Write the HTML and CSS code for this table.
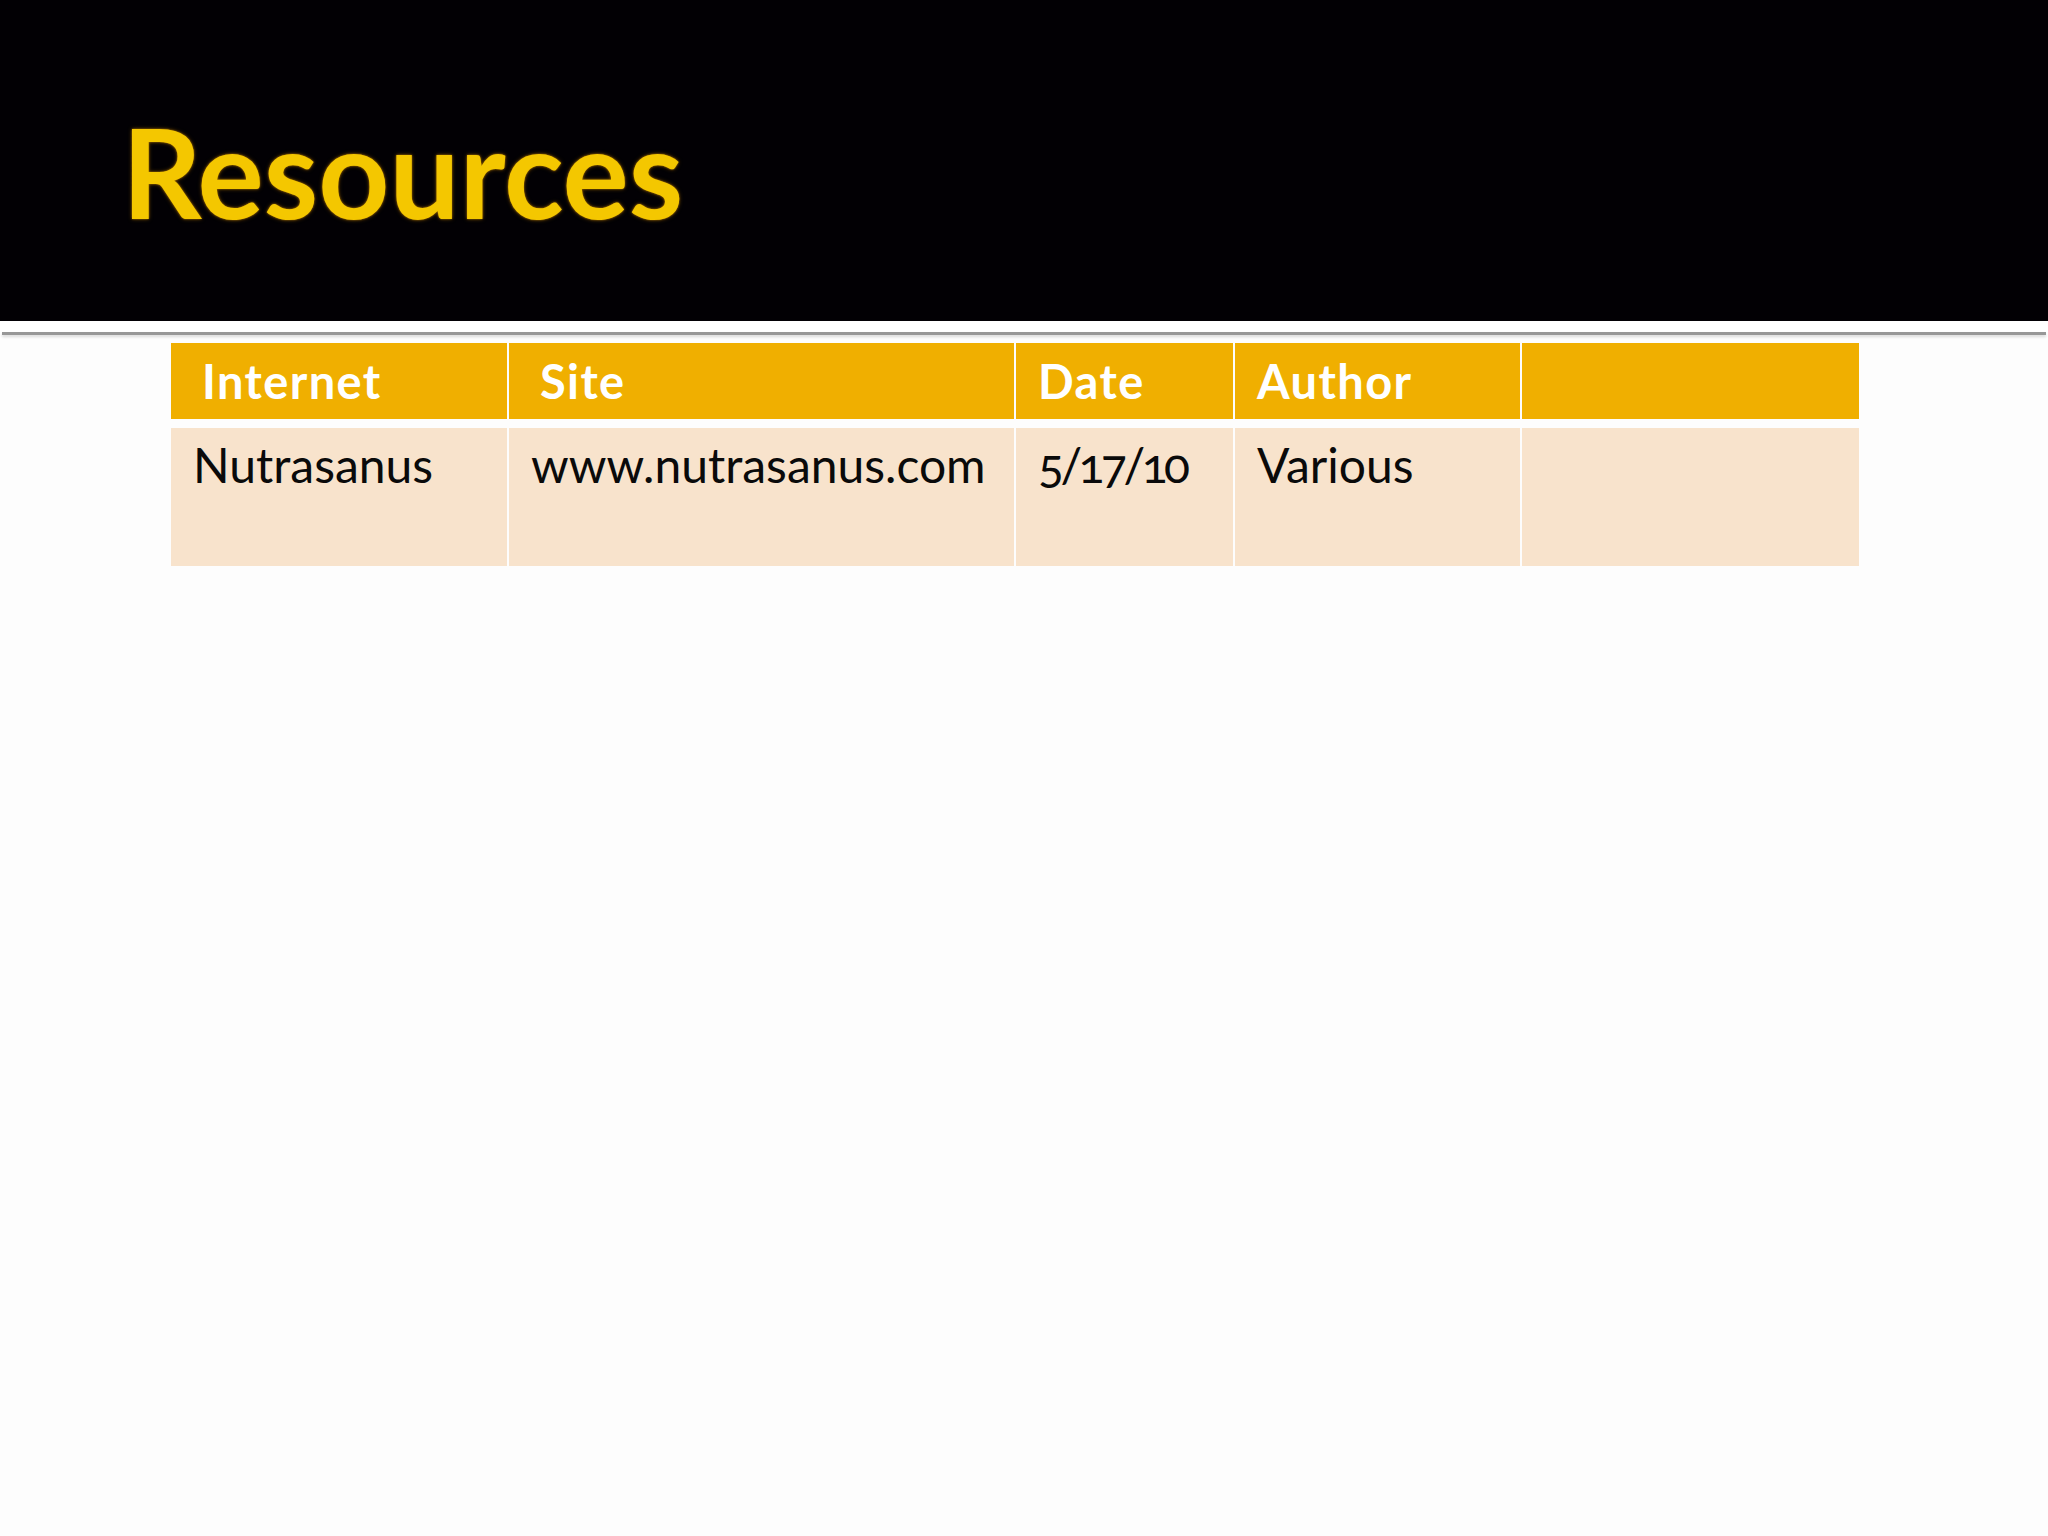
FILE: index.html
```html
<!DOCTYPE html>
<html lang="en">
<head>
<meta charset="utf-8">
<title>Resources</title>
<link rel="stylesheet" href="styles.css">
</head>
<body>
<div class="slide">
  <header class="titlebar">
    <h1 class="title">Resources</h1>
  </header>
  <div class="band"></div>
  <div class="rule"></div>
  <main class="content">
    <div class="grid">
      <div class="cell head indent">Internet</div>
      <div class="cell head indent">Site</div>
      <div class="cell head">Date</div>
      <div class="cell head">Author</div>
      <div class="cell head"></div>
      <div class="cell body">Nutrasanus</div>
      <div class="cell body">www.nutrasanus.com</div>
      <div class="cell body nums">5/17/10</div>
      <div class="cell body">Various</div>
      <div class="cell body"></div>
    </div>
  </main>
</div>
</body>
</html>
```

FILE: styles.css
```css
html, body {
  margin: 0;
  padding: 0;
}

body {
  background: #fdfdfd;
  font-family: Lato, "Open Sans", "Liberation Sans", sans-serif;
  width: 2048px;
  height: 1536px;
  overflow: hidden;
}

.slide {
  display: flex;
  flex-direction: column;
}

.titlebar {
  background: #020004;
  height: 321px;
  box-sizing: border-box;
  padding: 97px 0 0 122px;
}

.title {
  margin: 0;
  font-size: 124px;
  line-height: 1.2;
  font-weight: 700;
  color: #f4c700;
  letter-spacing: 0px;
  text-shadow: 0 0 2px #b07a00, 0 0 4px rgba(160, 100, 0, 0.6);
}

.band {
  height: 11px;
  background: #ffffff;
}

.rule {
  height: 3px;
  margin: 0 2px 0 2px;
  background: #979797;
  box-shadow: 0 2px 3px rgba(0, 0, 0, 0.15);
}

.content {
  padding: 8px 0 0 171px;
}

.grid {
  display: grid;
  grid-template-columns: 336px 505px 217px 285px 337px;
  grid-template-rows: 76px 138px;
  column-gap: 2px;
  row-gap: 9px;
  width: 1688px;
}

.cell {
  box-sizing: border-box;
  padding-left: 22px;
  line-height: 1.2;
}

.head {
  background: #f0af00;
  color: #ffffff;
  font-weight: 700;
  font-size: 47px;
  letter-spacing: 1.4px;
  padding-top: 10px;
}

.head.indent {
  padding-left: 31px;
}

.body {
  background: #f8e3cc;
  color: #0a0a0a;
  font-size: 48px;
  padding-top: 8px;
}

.nums {
  font-variant-numeric: oldstyle-nums;
  letter-spacing: -3.5px;
}
```
